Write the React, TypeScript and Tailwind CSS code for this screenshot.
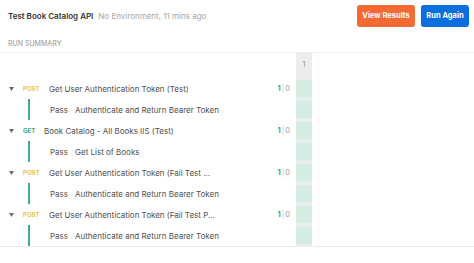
import React from "react";

type Row =
  | { kind: "req"; method: "POST" | "GET"; name: string }
  | { kind: "test"; name: string };

const rows: Row[] = [
  { kind: "req", method: "POST", name: "Get User Authentication Token (Test)" },
  { kind: "test", name: "Authenticate and Return Bearer Token" },
  { kind: "req", method: "GET", name: "Book Catalog - All Books IIS (Test)" },
  { kind: "test", name: "Get List of Books" },
  { kind: "req", method: "POST", name: "Get User Authentication Token (Fail Test ..." },
  { kind: "test", name: "Authenticate and Return Bearer Token" },
  { kind: "req", method: "POST", name: "Get User Authentication Token (Fail Test P..." },
  { kind: "test", name: "Authenticate and Return Bearer Token" },
];

function Caret() {
  return (
    <svg width="5" height="4" viewBox="0 0 5 4" className="shrink-0">
      <path d="M0 0 L5 0 L2.5 4 Z" fill="#6b6b6b" />
    </svg>
  );
}

export default function App() {
  return (
    <div
      className="w-[474px] h-[263px] bg-white overflow-hidden"
      style={{ fontFamily: "Inter, 'Noto Sans', sans-serif" }}
    >
      {/* Header */}
      <div className="flex items-center justify-between pl-2 pr-[5px] pt-[5px] h-[27px]">
        <div className="flex items-baseline gap-[5px]">
          <span className="text-[8px] font-semibold text-[#333333]">Test Book Catalog API</span>
          <span className="text-[8px] text-[#a6a6a6]">No Environment, 11 mins ago</span>
        </div>
        <div className="flex items-center gap-[6px]">
          <div className="h-[22px] w-[58px] rounded-[3px] bg-[#f46a35] flex items-center justify-center text-white text-[7.5px] font-bold">
            View Results
          </div>
          <div className="h-[22px] w-[48px] rounded-[3px] bg-[#0b6fde] flex items-center justify-center text-white text-[7.5px] font-bold">
            Run Again
          </div>
        </div>
      </div>

      {/* Run summary label */}
      <div className="h-[26px] flex items-end pb-[3px] pl-2 border-b border-[#efefef]">
        <span className="text-[7px] leading-[10px] font-medium text-[#a8a8a8]">RUN SUMMARY</span>
      </div>

      {/* Table */}
      <div className="border-b border-[#ececec]">
        {/* header row */}
        <div className="flex h-[25px]">
          <div className="w-[296px]" />
          <div className="w-[16px] bg-[#ededed] flex items-center justify-center text-[7px] text-[#8a8a8a]">
            1
          </div>
          <div className="flex-1 border-l border-[#f6f6f6] ml-[6px]" />
        </div>
        {rows.map((r, i) => (
          <div key={i} className="flex h-[21px]">
            <div className="w-[296px] flex items-center">
              {r.kind === "req" ? (
                <div className="flex items-center w-full pl-[9px] pr-[6px]">
                  <Caret />
                  <span
                    className={
                      r.method === "POST"
                        ? "ml-[9px] text-[6px] font-bold text-[#e9c53c] w-[26px]"
                        : "ml-[9px] text-[6px] font-bold text-[#3aa874] w-[21px]"
                    }
                  >
                    {r.method}
                  </span>
                  <span className="text-[8px] text-[#505050] whitespace-nowrap">{r.name}</span>
                  <span className="ml-auto text-[7.5px] whitespace-nowrap">
                    <span className="font-bold text-[#3aa874]">1</span>
                    <span className="text-[#c4c4c4] mx-[1px]">|</span>
                    <span className="text-[#9a9a9a]">0</span>
                  </span>
                </div>
              ) : (
                <div className="flex items-center h-full pl-[28px]">
                  <div className="w-[2px] h-full bg-[#3fae7c]" />
                  <span className="ml-[20px] text-[8px] text-[#555555] w-[25px]">Pass</span>
                  <span className="text-[8px] text-[#505050] whitespace-nowrap">{r.name}</span>
                </div>
              )}
            </div>
            <div className="w-[16px] bg-[#eaeeeb] flex items-center">
              <div className="w-full h-[17px] bg-[#d4ede0]" />
            </div>
            <div className="flex-1 border-l border-[#f6f6f6] ml-[6px]" />
          </div>
        ))}
      </div>
    </div>
  );
}
